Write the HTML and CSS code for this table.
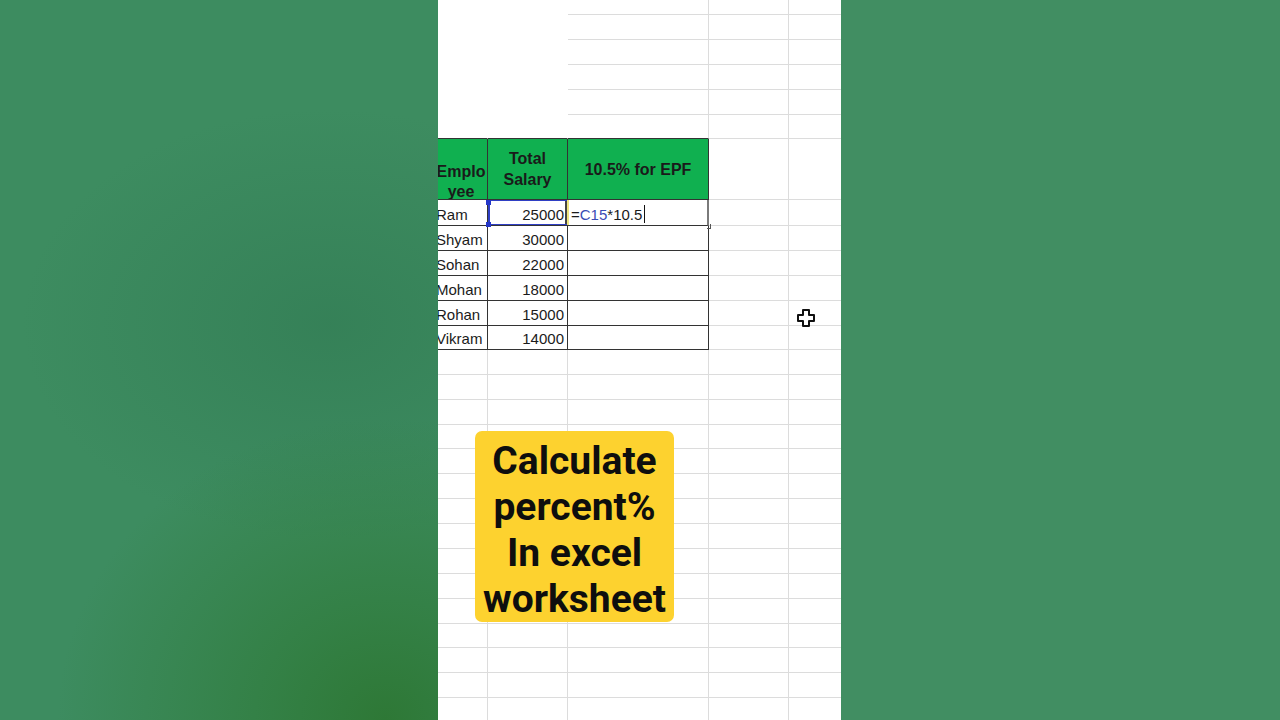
FILE: index.html
```html
<!DOCTYPE html>
<html lang="en">
<head>
<meta charset="utf-8">
<title>Calculate percent in Excel</title>
<link rel="stylesheet" href="styles.css">
</head>
<body>
<div class="screen">
  <div class="side side-left"></div>
  <div class="sheet">
    <div class="grid">
      <div class="row h15"><div class="c ca blank"></div><div class="c cb blank"></div><div class="c cc"></div><div class="c cd"></div><div class="c ce"></div></div>
      <div class="row h25"><div class="c ca blank"></div><div class="c cb blank"></div><div class="c cc"></div><div class="c cd"></div><div class="c ce"></div></div>
      <div class="row h25"><div class="c ca blank"></div><div class="c cb blank"></div><div class="c cc"></div><div class="c cd"></div><div class="c ce"></div></div>
      <div class="row h25"><div class="c ca blank"></div><div class="c cb blank"></div><div class="c cc"></div><div class="c cd"></div><div class="c ce"></div></div>
      <div class="row h25"><div class="c ca blank"></div><div class="c cb blank"></div><div class="c cc"></div><div class="c cd"></div><div class="c ce"></div></div>
      <div class="row h24"><div class="c ca blank edge"></div><div class="c cb blank edge"></div><div class="c cc edge"></div><div class="c cd"></div><div class="c ce"></div></div>

      <div class="row h61">
        <div class="c ca th th-a"><span>Emplo<br>yee</span></div>
        <div class="c cb th"><span>Total<br>Salary</span></div>
        <div class="c cc th"><span>10.5% for EPF</span></div>
        <div class="c cd"></div><div class="c ce"></div>
      </div>

      <div class="row h26">
        <div class="c ca td name">Ram</div>
        <div class="c cb td num ref"><i class="hdl tl"></i><i class="hdl bl"></i>25000</div>
        <div class="c cc td fx">=<span class="blue">C15</span>*10.5<span class="caret"></span></div>
        <div class="c cd"></div><div class="c ce"></div>
      </div>
      <div class="row h25"><div class="c ca td name">Shyam</div><div class="c cb td num">30000</div><div class="c cc td"></div><div class="c cd"></div><div class="c ce"></div></div>
      <div class="row h25"><div class="c ca td name">Sohan</div><div class="c cb td num">22000</div><div class="c cc td"></div><div class="c cd"></div><div class="c ce"></div></div>
      <div class="row h25"><div class="c ca td name">Mohan</div><div class="c cb td num">18000</div><div class="c cc td"></div><div class="c cd"></div><div class="c ce"></div></div>
      <div class="row h25"><div class="c ca td name">Rohan</div><div class="c cb td num">15000</div><div class="c cc td"></div><div class="c cd"></div><div class="c ce"></div></div>
      <div class="row h24"><div class="c ca td name">Vikram</div><div class="c cb td num">14000</div><div class="c cc td"></div><div class="c cd"></div><div class="c ce"></div></div>

      <div class="row h25"><div class="c ca"></div><div class="c cb"></div><div class="c cc"></div><div class="c cd"></div><div class="c ce"></div></div>
      <div class="row h25"><div class="c ca"></div><div class="c cb"></div><div class="c cc"></div><div class="c cd"></div><div class="c ce"></div></div>
      <div class="row h25"><div class="c ca"></div><div class="c cb"></div><div class="c cc"></div><div class="c cd"></div><div class="c ce"></div></div>
      <div class="row h24"><div class="c ca"></div><div class="c cb"></div><div class="c cc"></div><div class="c cd"></div><div class="c ce"></div></div>
      <div class="row h25"><div class="c ca"></div><div class="c cb"></div><div class="c cc"></div><div class="c cd"></div><div class="c ce"></div></div>
      <div class="row h25"><div class="c ca"></div><div class="c cb"></div><div class="c cc"></div><div class="c cd"></div><div class="c ce"></div></div>
      <div class="row h25"><div class="c ca"></div><div class="c cb"></div><div class="c cc"></div><div class="c cd"></div><div class="c ce"></div></div>
      <div class="row h25"><div class="c ca"></div><div class="c cb"></div><div class="c cc"></div><div class="c cd"></div><div class="c ce"></div></div>
      <div class="row h25"><div class="c ca"></div><div class="c cb"></div><div class="c cc"></div><div class="c cd"></div><div class="c ce"></div></div>
      <div class="row h25"><div class="c ca"></div><div class="c cb"></div><div class="c cc"></div><div class="c cd"></div><div class="c ce"></div></div>
      <div class="row h25"><div class="c ca"></div><div class="c cb"></div><div class="c cc"></div><div class="c cd"></div><div class="c ce"></div></div>
      <div class="row h24"><div class="c ca"></div><div class="c cb"></div><div class="c cc"></div><div class="c cd"></div><div class="c ce"></div></div>
      <div class="row h25"><div class="c ca"></div><div class="c cb"></div><div class="c cc"></div><div class="c cd"></div><div class="c ce"></div></div>
      <div class="row h25"><div class="c ca"></div><div class="c cb"></div><div class="c cc"></div><div class="c cd"></div><div class="c ce"></div></div>
      <div class="row h25"><div class="c ca"></div><div class="c cb"></div><div class="c cc"></div><div class="c cd"></div><div class="c ce"></div></div>
    </div>

    <div class="label">Calculate<br>percent%<br>In excel<br>worksheet</div>

    <svg class="cursor" width="20" height="20" viewBox="0 0 20 20" aria-hidden="true">
      <path d="M7 2h6v5h5v6h-5v5H7v-5H2V7h5z" fill="#fff" stroke="#111" stroke-width="2" stroke-linejoin="round"/>
    </svg>
  </div>
  <div class="side side-right"></div>
</div>
</body>
</html>
```

FILE: styles.css
```css
html, body {
  margin: 0;
  padding: 0;
}

body {
  width: 1280px;
  height: 720px;
  overflow: hidden;
}

.screen {
  display: flex;
  height: 720px;
}

.side {
  flex: none;
  height: 720px;
}

.side-left {
  width: 438px;
  background:
    radial-gradient(ellipse 75% 42% at 88% 100%, #2e7836 0%, rgba(48, 124, 60, 0.75) 35%, rgba(58, 138, 90, 0) 100%),
    radial-gradient(ellipse 70% 30% at 75% 45%, rgba(50, 124, 84, 0.7) 0%, rgba(50, 124, 84, 0) 100%),
    #3d8c60;
}

.side-right {
  flex: 1;
  background: #418e62;
}

.sheet {
  flex: none;
  width: 403px;
  height: 720px;
  position: relative;
  overflow: hidden;
  background: #fff;
  font-family: "Liberation Sans", Arial, sans-serif;
  font-size: 15px;
  color: #1b1b1b;
}

.grid {
  margin-left: -3px;
  width: 420px;
}

.row {
  display: flex;
}

.h15 { height: 15px; }
.h24 { height: 24px; }
.h25 { height: 25px; }
.h26 { height: 26px; }
.h61 { height: 61px; }

.c {
  flex: none;
  box-sizing: border-box;
  height: 100%;
  border-right: 1px solid #dcdcdc;
  border-bottom: 1px solid #dcdcdc;
  display: flex;
  align-items: flex-end;
  line-height: 17px;
  padding-bottom: 2px;
  white-space: nowrap;
  overflow: hidden;
}

.ca { width: 53px; }
.cb { width: 80px; }
.cc { width: 141px; }
.cd { width: 80px; }
.ce { width: 60px; }

.blank {
  border-color: transparent;
}

.edge {
  border-bottom-color: #333;
}

.th {
  background: #10b050;
  border-right-color: #333;
  border-bottom-color: #333;
  font-weight: bold;
  font-size: 16px;
  line-height: 21px;
  justify-content: center;
  align-items: center;
  text-align: center;
  padding: 0;
  color: #1a1a1a;
}

.th-a {
  align-items: flex-end;
  line-height: 20px;
}

.th-a span {
  margin-bottom: -3px;
}

.td {
  border-right-color: #333;
  border-bottom-color: #333;
}

.name {
  padding-left: 1px;
}

.num {
  justify-content: flex-end;
  padding-right: 3px;
}

.ref {
  position: relative;
  overflow: visible;
  box-shadow: inset 2px 0 0 #2f3fc4, inset 0 -1px 0 #2f3fc4, inset 0 1px 0 #2f3fc4, inset -2px 0 0 #444;
}

.hdl {
  position: absolute;
  left: -2px;
  width: 5px;
  height: 5px;
  background: #2436c8;
}

.hdl.tl { top: 0; }
.hdl.bl { bottom: -2px; }

.fx {
  position: relative;
  overflow: visible;
  padding-left: 3px;
  border-right: 2px solid #7a7a7a;
}

.fx::before {
  content: "";
  position: absolute;
  left: -1px;
  top: 0;
  bottom: 0;
  width: 2px;
  background: #ede37e;
}

.fx::after {
  content: "";
  position: absolute;
  right: -4px;
  bottom: -4px;
  width: 3px;
  height: 4px;
  border-right: 1px solid #555;
  border-bottom: 1px solid #555;
}

.blue {
  color: #3a4cb4;
}

.caret {
  display: inline-block;
  width: 1px;
  height: 18px;
  margin-left: 2px;
  background: #111;
  vertical-align: -4px;
}

.label {
  position: absolute;
  left: 37px;
  top: 431px;
  width: 199px;
  height: 191px;
  box-sizing: border-box;
  padding-top: 7px;
  background: #fdd22f;
  border-radius: 7px;
  font-family: Roboto, "Liberation Sans", sans-serif;
  font-weight: 700;
  font-size: 39px;
  line-height: 46px;
  text-align: center;
  color: #0e0e0e;
  white-space: nowrap;
}

.cursor {
  position: absolute;
  left: 358px;
  top: 308px;
}
```
